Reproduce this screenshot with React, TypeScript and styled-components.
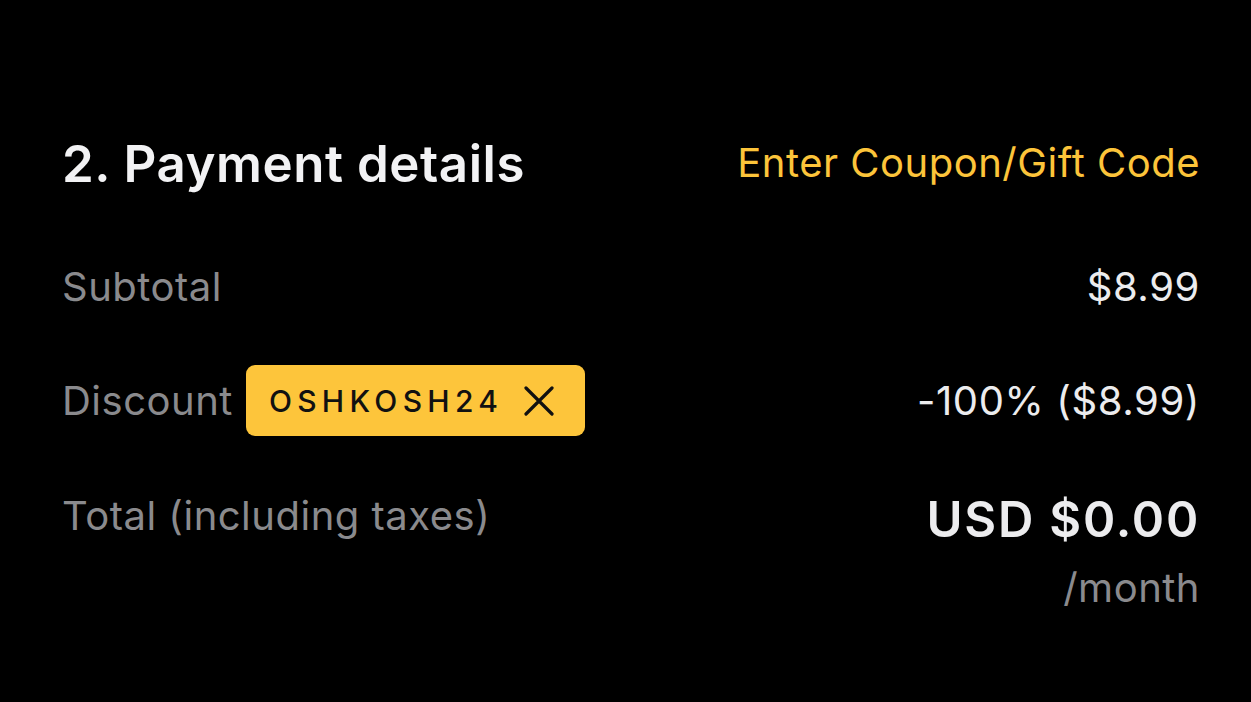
import React from "react";
import styled, { createGlobalStyle } from "styled-components";

const Global = createGlobalStyle`
  html, body { margin: 0; padding: 0; background: #000; }
  body { font-family: Inter, "Noto Sans", sans-serif; -webkit-font-smoothing: antialiased; }
`;

const Page = styled.div`
  width: 1251px;
  height: 702px;
  background: #000;
  box-sizing: border-box;
  padding: 134px 51px 0 62px;
  display: flex;
  flex-direction: column;
`;

const Header = styled.div`
  display: flex;
  justify-content: space-between;
  align-items: flex-start;
  margin-bottom: 65px;
`;

const Title = styled.h2`
  margin: 0;
  font-size: 51px;
  font-weight: 600;
  color: #f2f2f4;
  letter-spacing: 0.55px;
  line-height: 60px;
`;

const LinkButton = styled.button`
  background: none;
  border: 0;
  padding: 0;
  font-family: inherit;
  font-size: 40px;
  font-weight: 400;
  letter-spacing: 0.5px;
  color: #fcc43a;
  line-height: 58px;
  cursor: pointer;
`;

const Row = styled.div<{ $gap: number; $align?: string }>`
  display: flex;
  justify-content: space-between;
  align-items: ${(p) => p.$align || "baseline"};
  margin-bottom: ${(p) => p.$gap}px;
`;

const Label = styled.div`
  display: flex;
  align-items: center;
  gap: 13px;
  font-size: 40px;
  letter-spacing: 0.5px;
  color: #8a8a8d;
  line-height: 56px;
`;

const Value = styled.div`
  font-size: 40px;
  letter-spacing: 0.6px;
  color: #ececee;
  line-height: 56px;
`;

const Badge = styled.div`
  display: flex;
  align-items: center;
  gap: 21px;
  height: 71px;
  box-sizing: border-box;
  padding: 0 31px 0 23px;
  background: #fdc53b;
  border-radius: 9px;
  font-size: 30px;
  font-weight: 500;
  letter-spacing: 5.3px;
  color: #111;
`;

const TotalCol = styled.div`
  display: flex;
  flex-direction: column;
  align-items: flex-end;
`;

const TotalValue = styled.div`
  font-size: 49px;
  font-weight: 600;
  letter-spacing: 1.8px;
  color: #ececee;
  line-height: 64px;
`;

const Per = styled.div`
  font-size: 40px;
  letter-spacing: 0.5px;
  color: #8a8a8d;
  line-height: 56px;
  margin-top: 8px;
`;

const CloseIcon = () => (
  <svg width="30" height="30" viewBox="0 0 30 30" fill="none">
    <path d="M2 2 L28 28 M28 2 L2 28" stroke="#111" strokeWidth="3.2" strokeLinecap="round" />
  </svg>
);

export default function App() {
  return (
    <>
      <Global />
      <Page>
        <Header>
          <Title>2. Payment details</Title>
          <LinkButton>Enter Coupon/Gift Code</LinkButton>
        </Header>
        <Row $gap={50}>
          <Label>Subtotal</Label>
          <Value>$8.99</Value>
        </Row>
        <Row $gap={52}>
          <Label>
            Discount
            <Badge>
              OSHKOSH24
              <CloseIcon />
            </Badge>
          </Label>
          <Value>-100% ($8.99)</Value>
        </Row>
        <Row $gap={0} $align="flex-start">
          <Label>Total (including taxes)</Label>
          <TotalCol>
            <TotalValue>USD $0.00</TotalValue>
            <Per>/month</Per>
          </TotalCol>
        </Row>
      </Page>
    </>
  );
}
